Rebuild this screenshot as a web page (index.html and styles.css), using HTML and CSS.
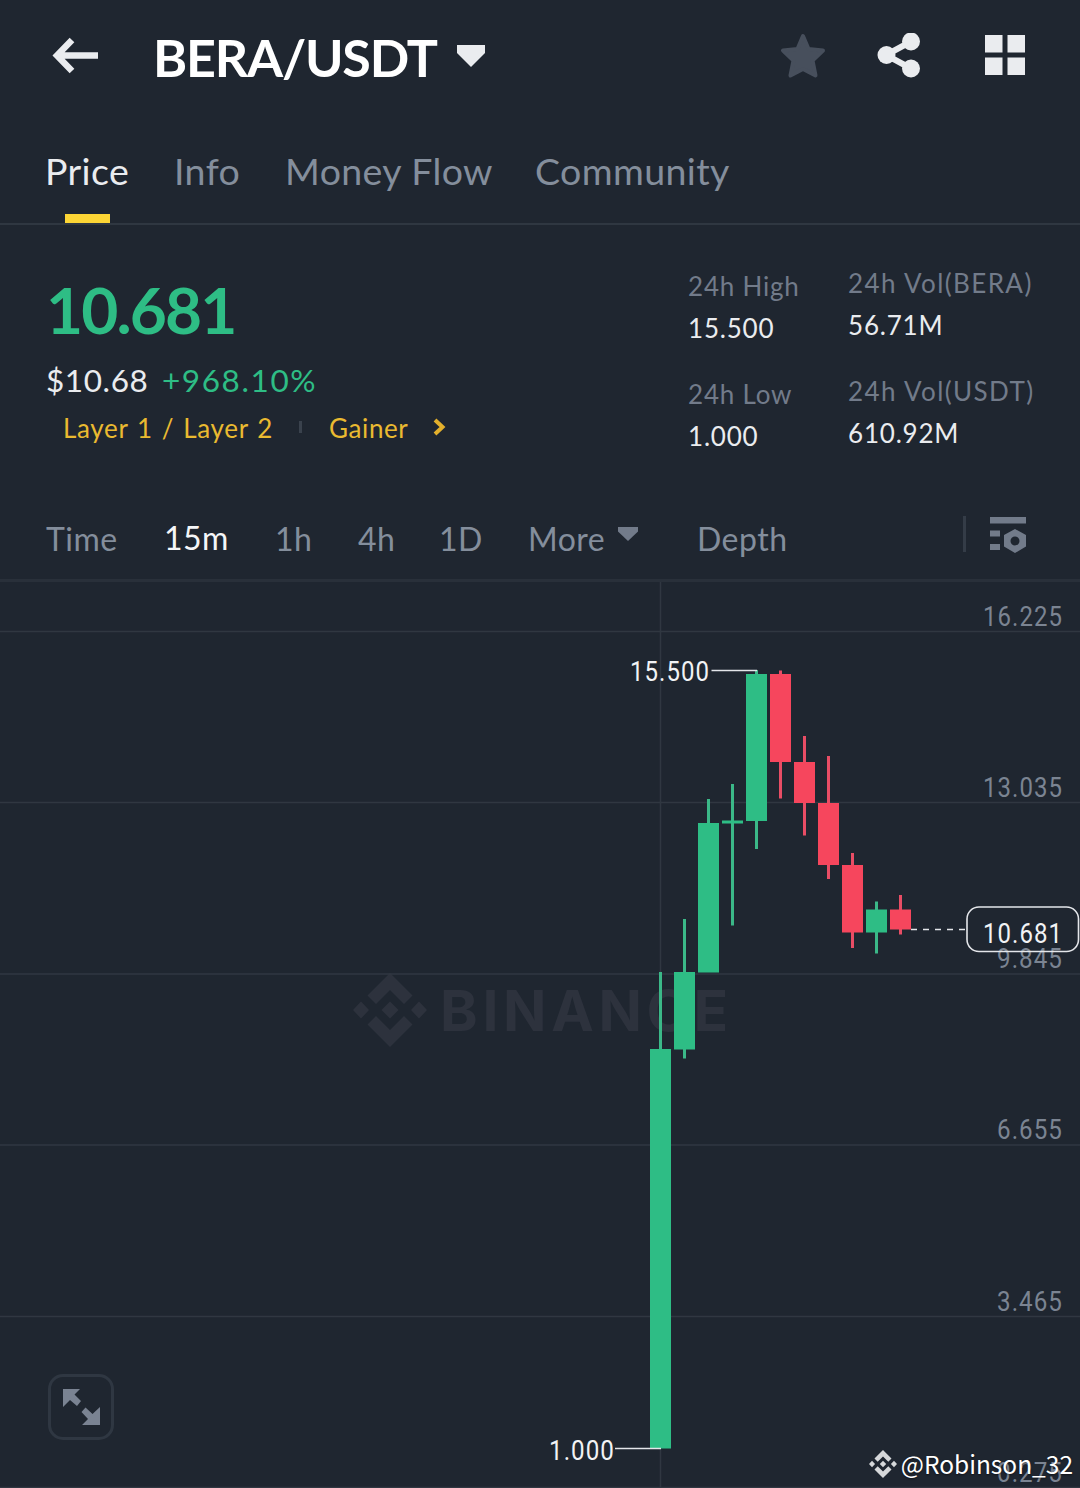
FILE: index.html
```html
<!DOCTYPE html>
<html lang="en">
<head>
    <meta charset="UTF-8">
    <meta name="viewport" content="width=device-width, initial-scale=1.0">
    <title>BERA/USDT</title>
    <link rel="stylesheet" href="styles.css">
</head>
<body>
    <header class="header">
        <svg class="back" width="48" height="40" viewBox="0 0 48 40">
            <path d="M21 4L6 19.500L21 35M6 19.500H47" fill="none" stroke="#eaecef" stroke-width="6.500"/>
        </svg>
        <h1 class="pair">BERA/USDT</h1>
        <svg class="pair-arrow" width="28" height="23" viewBox="0 0 28 23">
            <path d="M0 0H28V8L14 22L0 8Z" fill="#eaecef"/>
        </svg>
        <div class="actions">
            <svg width="46" height="48" viewBox="0 0 46 48">
                <path d="M23 4L28.500 17L43 18.500L32.500 28.500L35.500 43.500L23 37L10.500 43.500L13.500 28.500L3 18.500L17.500 17Z" fill="#474f5c" stroke="#474f5c" stroke-width="4" stroke-linejoin="round"/>
            </svg>
            <svg width="44" height="46" viewBox="0 1 44 46">
                <path d="M35 9L9 23L35 37" fill="none" stroke="#eaecef" stroke-width="6"/>
                <circle cx="9.500" cy="23" r="9" fill="#eaecef"/>
                <circle cx="34" cy="9.500" r="9" fill="#eaecef"/>
                <circle cx="34" cy="36.500" r="9" fill="#eaecef"/>
            </svg>
            <svg width="40" height="42" viewBox="0 0 40 42">
                <path d="M0 0H17.500V17.500H0ZM22.500 0H40V17.500H22.500ZM0 22.500H17.500V40H0ZM22.500 22.500H40V40H22.500Z" fill="#eaecef"/>
            </svg>
        </div>
    </header>

    <nav class="tabs">
        <a class="tab active">Price</a>
        <a class="tab">Info</a>
        <a class="tab">Money Flow</a>
        <a class="tab">Community</a>
    </nav>

    <section class="summary">
        <div class="quote">
            <div class="last-price">10.681</div>
            <div class="change-row">
                <span class="fiat">$10.68</span>
                <span class="change">+968.10%</span>
            </div>
            <div class="tags">
                <span class="tag-layer">Layer 1 / Layer 2</span>
                <i class="tag-line"></i>
                <span class="tag-gainer">Gainer</span>
                <svg width="13" height="18" viewBox="0 0 13 18">
                    <path d="M2 2L9.500 9L2 16" fill="none" stroke="#e3b02c" stroke-width="4"/>
                </svg>
            </div>
        </div>
        <div class="stats stats-price">
            <div class="label">24h High</div>
            <div class="value">15.500</div>
            <div class="label">24h Low</div>
            <div class="value">1.000</div>
        </div>
        <div class="stats stats-vol">
            <div class="label">24h Vol(BERA)</div>
            <div class="value">56.71M</div>
            <div class="label">24h Vol(USDT)</div>
            <div class="value">610.92M</div>
        </div>
    </section>

    <nav class="intervals">
        <a>Time</a>
        <a class="active">15m</a>
        <a>1h</a>
        <a>4h</a>
        <a>1D</a>
        <a class="more">More
            <svg width="20" height="14" viewBox="0 0 20 14"><path d="M0 0H20V4.500L10 14L0 4.500Z" fill="#727b8a"/></svg>
        </a>
        <a>Depth</a>
        <div class="settings">
            <svg width="36" height="37" viewBox="0 0 36 37">
                <path d="M0 0H36V6.500H0ZM0 13.500H10V19.500H0ZM0 27H10V33H0Z" fill="#727b8a"/>
                <path fill-rule="evenodd" d="M25 12L36 18V29.500L25 36L14 29.500V18ZM25 19.500A4.500 4.500 0 1 0 25 28.500A4.500 4.500 0 1 0 25 19.500Z" fill="#727b8a"/>
            </svg>
        </div>
    </nav>

    <main class="chart">
        <svg class="chart-svg" width="1080" height="906" viewBox="0 582 1080 906">
            <!-- logo behind the candles -->
            <g class="logo">
                <path id="mark" d="M390 973L412.500 995.500L404 1004L390 990L376 1004L367.500 995.500ZM390 1047L412.500 1024.500L404 1016L390 1030L376 1016L367.500 1024.500ZM390 1001.500L398.500 1010L390 1018.500L381.500 1010ZM361 1001.500L369 1010L361 1018.500L353 1010ZM419 1001.500L427 1010L419 1018.500L411 1010Z"/>
                <text x="440" y="1031" textLength="288">BINANCE</text>
            </g>
            <!-- grid -->
            <g class="grid">
                <path d="M0 631.500H1080M0 802.500H1080M0 974H1080M0 1145H1080M0 1316.500H1080M0 1487.500H1080M660.500 582V1488"/>
            </g>
            <g class="axis">
                <text x="983" y="626" textLength="80" lengthAdjust="spacingAndGlyphs">16.225</text>
                <text x="983" y="797" textLength="80" lengthAdjust="spacingAndGlyphs">13.035</text>
                <text x="997" y="968" textLength="66" lengthAdjust="spacingAndGlyphs">9.845</text>
                <text x="997" y="1139" textLength="66" lengthAdjust="spacingAndGlyphs">6.655</text>
                <text x="997" y="1311" textLength="66" lengthAdjust="spacingAndGlyphs">3.465</text>
                <text x="997" y="1482" textLength="66" lengthAdjust="spacingAndGlyphs">0.275</text>
            </g>
            <!-- candles -->
            <g class="up">
                <path class="wick" d="M660.500 972V1448M684.500 919V1058.500M708.500 799V972M732.500 784V925.500M756.500 670V849M876.500 901.500V953.500"/>
                <path d="M650 1049H671V1448.500H650ZM674 972H695V1049.500H674ZM698 823H719V972.500H698ZM722 820.500H743V823.500H722ZM746 674H767V821H746ZM866 909.500H887V932.500H866Z"/>
            </g>
            <g class="down">
                <path class="wick" d="M780.500 670.500V798.500M804.500 736V835.500M828.500 756V879M852.500 853V948M900.500 895V934.500"/>
                <path d="M770 674H791V762H770ZM794 762H815V803H794ZM818 803H839V865H818ZM842 865H863V932.500H842ZM890 909.500H911V929.500H890Z"/>
            </g>
            <!-- high, low and last price -->
            <g class="marks">
                <path d="M711.500 670.500H757M615 1448.500H661"/>
                <path d="M911 929.500H966" stroke-dasharray="6 6"/>
                <rect x="967" y="907" width="111.500" height="44.500" rx="12"/>
                <text x="630" y="681" textLength="80" lengthAdjust="spacingAndGlyphs">15.500</text>
                <text x="549" y="1460" textLength="66" lengthAdjust="spacingAndGlyphs">1.000</text>
                <text x="983" y="943" textLength="80" lengthAdjust="spacingAndGlyphs">10.681</text>
            </g>
        </svg>

        <button class="expand">
            <svg width="37" height="36" viewBox="0 0 37 36">
                <path d="M0 0H17L11.500 5.500L18 12L14 17L7 11L0 18ZM37 36H19L25 30L18.500 23L22.500 18.500L29.500 25L37 18Z" fill="#7a8392"/>
            </svg>
        </button>
        <div class="author">
            <svg width="28" height="28" viewBox="353 973 74 74"><use href="#mark" fill="#d6d8da"/></svg>
            <span>@Robinson_32</span>
        </div>
    </main>
</body>
</html>
```
FILE: styles.css
```css
* {
    box-sizing: border-box;
}
body {
    margin: 0;
    width: 1080px;
    height: 1488px;
    overflow: hidden;
    background-color: #1f2630;
    color: #eaecef;
    font-family: Lato, "Noto Sans", sans-serif;
}
svg {
    display: block;
    flex: none;
}

/* header */
.header {
    display: flex;
    align-items: center;
    height: 112px;
    padding: 0 55px 0 51px;
}
.pair {
    width: 282px;
    margin: 0 22px 0 54px;
    padding-top: 3px;
    font-size: 52px;
    line-height: 109px;
    font-weight: 700;
    letter-spacing: -1.2px;
    color: #fff;
    white-space: nowrap;
}
.actions {
    display: flex;
    align-items: center;
    margin-left: auto;
}
.actions svg:nth-child(2) {
    margin: 0 64px 0 51px;
}

/* tabs */
.tabs {
    display: grid;
    grid-template-columns: 129px 111px 250px auto;
    height: 113px;
    padding: 28px 0 0 45px;
    border-bottom: 2px solid #2f3741;
}
.tab {
    position: relative;
    justify-self: start;
    height: 83px;
    font-size: 37.5px;
    line-height: 61px;
    letter-spacing: 0.4px;
    color: #848e9c;
}
.tab.active {
    color: #eaecef;
}
.tab.active::after {
    content: "";
    position: absolute;
    left: 20px;
    bottom: 0;
    width: 45px;
    height: 9px;
    background-color: #fcd535;
}

/* price summary */
.summary {
    display: flex;
    height: 272px;
}
.quote {
    width: 688px;
    padding: 46px 0 0 46px;
}
.last-price {
    font-size: 64px;
    line-height: 77px;
    font-weight: 700;
    letter-spacing: -1.9px;
    color: #2ebd85;
}
.change-row {
    display: flex;
    margin-top: 8px;
    font-size: 31.5px;
    line-height: 48px;
}
.fiat {
    width: 116px;
    letter-spacing: 0.6px;
}
.change {
    color: #2ebd85;
    letter-spacing: 1.6px;
}
.tags {
    display: flex;
    align-items: center;
    margin: 2px 0 0 17px;
    font-size: 26px;
    line-height: 40px;
    color: #eaba30;
}
.tags span {
    padding-top: 2px;
}
.tag-layer {
    width: 209px;
    letter-spacing: 0.7px;
    word-spacing: 1.6px;
    white-space: nowrap;
}
.tag-line {
    width: 3px;
    height: 12px;
    margin: 0 27px;
    background-color: #3a424d;
}
.tag-gainer {
    width: 104px;
    letter-spacing: 0.6px;
}
.stats {
    padding-top: 39.5px;
    font-size: 26px;
    line-height: 42px;
    letter-spacing: 0.8px;
    white-space: nowrap;
}
.stats-price {
    width: 160px;
}
.stats-vol {
    padding-top: 36.5px;
}
.stats-vol .label {
    letter-spacing: 1.4px;
}
.label {
    color: #727b8a;
}
.value + .label {
    margin-top: 24px;
}

/* intervals */
.intervals {
    display: grid;
    grid-template-columns: 118px 111px 83px 81px 89px 169px 266px auto;
    height: 85px;
    padding-left: 46px;
    border-bottom: 3px solid #29303a;
    font-size: 32px;
    line-height: 84px;
    letter-spacing: 0.5px;
    color: #848e9c;
}
.intervals .active {
    color: #f5f6f8;
    line-height: 82px;
}
.more {
    display: flex;
    gap: 13px;
}
.more svg {
    margin-top: 30px;
}
.settings {
    height: 36px;
    margin-top: 19px;
    padding: 1px 0 0 24px;
    border-left: 3px solid #343c47;
}

/* chart */
.chart {
    position: relative;
    height: 906px;
}
.logo {
    fill: #2d323d;
}
.logo text {
    font-family: Inter, sans-serif;
    font-size: 57px;
    font-weight: 700;
}
.grid path {
    stroke: #303741;
    stroke-width: 1.5;
}
.axis text,
.marks text {
    font-family: Roboto, sans-serif;
    font-size: 27.5px;
    letter-spacing: 1.2px;
}
.axis text {
    fill: #7b8492;
}
.marks text {
    fill: #f2f3f5;
}
.marks path,
.marks rect {
    fill: none;
    stroke: #e4e6ea;
    stroke-width: 1.6;
}
.up {
    fill: #2ebd85;
}
.down {
    fill: #f6465d;
}
.wick {
    stroke-width: 3;
}
.up .wick {
    stroke: #3bb888;
}
.down .wick {
    stroke: #e84d65;
}
.expand {
    position: absolute;
    left: 48px;
    bottom: 48px;
    display: flex;
    align-items: center;
    justify-content: center;
    width: 66px;
    height: 66px;
    padding: 0;
    border: 3px solid #2f3742;
    border-radius: 15px;
    background: none;
}
.author {
    position: absolute;
    right: 7px;
    bottom: 4px;
    display: flex;
    align-items: center;
    gap: 4px;
    font-family: "Noto Sans CJK SC", sans-serif;
    font-size: 24.5px;
    line-height: 40px;
    color: #fff;
    text-shadow: 0 1px 2px rgba(0, 0, 0, 0.5);
}
```
